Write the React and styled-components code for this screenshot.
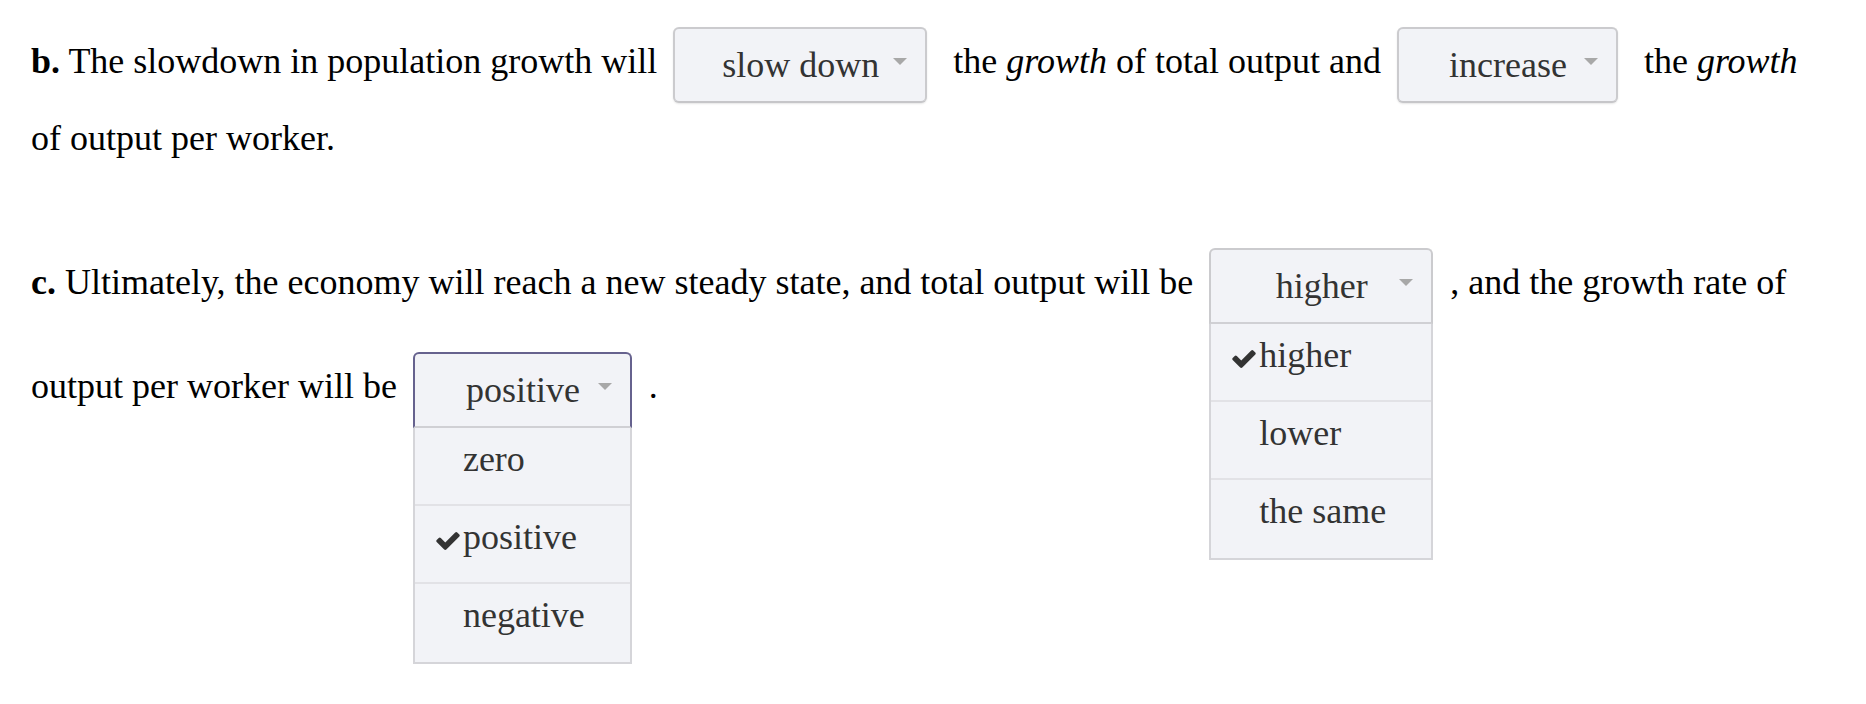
import React from 'react';
import styled, { createGlobalStyle } from 'styled-components';

const GlobalStyle = createGlobalStyle`
  html, body {
    margin: 0;
    padding: 0;
    background: #fff;
  }
  body {
    font-family: "Liberation Serif", "Times New Roman", serif;
    color: #000;
  }
`;

const Page = styled.div`
  box-sizing: border-box;
  min-height: 100vh;
  padding: 13px 40px 0 31px;
  font-size: 36px;
  line-height: normal;
`;

const Question = styled.p`
  margin: 0 0 75px;
`;

const Select = styled.span`
  position: relative;
  display: inline-block;
  vertical-align: middle;
  margin: 14px 17px 14px 7px;
`;

const Toggle = styled.span`
  position: relative;
  display: grid;
  align-items: center;
  justify-items: center;
  box-sizing: border-box;
  height: 76px;
  padding: 0 46px 0 47px;
  background: #f2f3f7;
  color: #333;
  border: 2px solid ${p => (p.$focused ? '#66628e' : '#cbcbce')};
  border-bottom-color: ${p => (p.$open ? '#d0d0d4' : p.$focused ? '#66628e' : '#c6c6c9')};
  border-radius: ${p => (p.$open ? '6px 6px 0 0' : '6px')};
  box-shadow: ${p => (p.$open ? 'none' : '0 1px 2px rgba(0, 0, 0, 0.1)')};
`;

const Label = styled.span`
  grid-area: 1 / 1;
  white-space: nowrap;
  visibility: ${p => (p.$shown ? 'visible' : 'hidden')};
`;

const Caret = styled.span`
  position: absolute;
  right: 18px;
  top: 29px;
  width: 0;
  height: 0;
  border-left: 7.5px solid transparent;
  border-right: 7.5px solid transparent;
  border-top: 7px solid #a8a8a8;
`;

const Menu = styled.ul`
  position: absolute;
  top: 100%;
  left: 0;
  right: 0;
  z-index: 10;
  margin: 0;
  padding: 0;
  list-style: none;
  background: #f2f3f7;
  color: #333;
  border: 2px solid #d5d5d9;
  border-top: none;
`;

const Item = styled.li`
  position: relative;
  box-sizing: border-box;
  height: 78px;
  padding: 11px 0 0 48px;
  line-height: 41px;
  white-space: nowrap;
  border-bottom: 2px solid #e2e2e6;

  &:last-child {
    border-bottom: none;
  }
`;

const CheckIcon = styled.svg`
  position: absolute;
  left: 21px;
  top: 26px;
  width: 24px;
  height: 18px;
  fill: #333;
`;

function Check() {
  return (
    <CheckIcon viewBox="121 334 1550 1188" aria-hidden="true">
      <path d="M1671 566q0 40-28 68l-724 724-136 136q-28 28-68 28t-68-28l-136-136-362-362q-28-28-28-68t28-68l136-136q28-28 68-28t68 28l294 295 656-657q28-28 68-28t68 28l136 136q28 28 28 68z" />
    </CheckIcon>
  );
}

function Dropdown({ options, value, open, focused }) {
  return (
    <Select>
      <Toggle $open={open} $focused={focused}>
        {options.map(o => (
          <Label key={o} $shown={o === value}>{o}</Label>
        ))}
        <Caret />
      </Toggle>
      {open && (
        <Menu>
          {options.map(o => (
            <Item key={o}>
              {o === value && <Check />}
              {o}
            </Item>
          ))}
        </Menu>
      )}
    </Select>
  );
}

export default function App() {
  return (
    <Page>
      <GlobalStyle />
      <Question>
        <b>b.</b> The slowdown in population growth will{' '}
        <Dropdown options={['speed up', 'slow down', 'not change']} value="slow down" />{' '}
        the <i>growth</i> of total output and{' '}
        <Dropdown options={['increase', 'decrease']} value="increase" />{' '}
        the <i>growth</i> of output per worker.
      </Question>
      <Question>
        <b>c.</b> Ultimately, the economy will reach a new steady state, and total output will be{' '}
        <Dropdown options={['higher', 'lower', 'the same']} value="higher" open />
        , and the growth rate of output per worker will be{' '}
        <Dropdown options={['zero', 'positive', 'negative']} value="positive" open focused />
        .
      </Question>
    </Page>
  );
}
